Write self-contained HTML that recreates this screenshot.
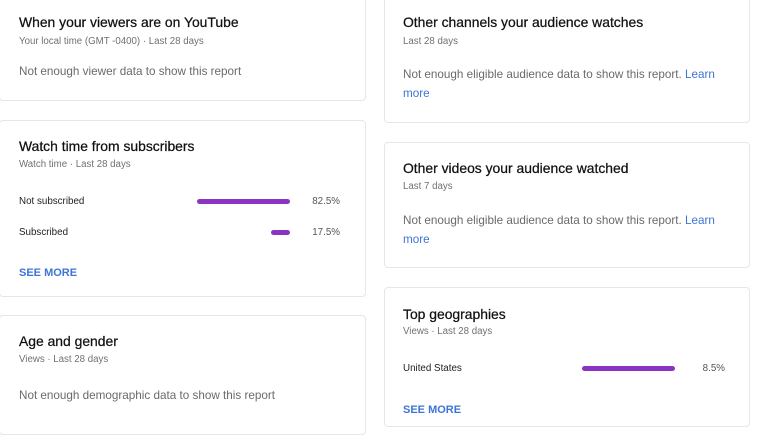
<!DOCTYPE html>
<html><head><meta charset="utf-8"><style>
body{margin:0;width:768px;height:415px;overflow:hidden;background:#fff;font-family:"Liberation Sans",Arial,sans-serif;position:relative}
.c{position:absolute;border:1px solid #e6e6e6;border-radius:4px;background:#fff;box-sizing:border-box}
.t{position:absolute;font-size:13.9px;font-weight:500;color:#111;white-space:nowrap;line-height:16px;-webkit-text-stroke:0.25px #111}
.s{position:absolute;font-size:9.7px;color:#717171;white-space:nowrap;line-height:12px}
.b{position:absolute;font-size:11.7px;color:#6a6a6a;white-space:nowrap;line-height:14px}
.r{position:absolute;font-size:9.8px;color:#222;white-space:nowrap;line-height:12px}
.p{position:absolute;font-size:9.8px;color:#555;white-space:nowrap;line-height:12px;text-align:right;width:40px}
.bar{position:absolute;height:5px;border-radius:3px;background:#8a35c2}
.m{position:absolute;font-size:11px;font-weight:bold;color:#3e74d4;line-height:12px}
a{color:#3e74d4;text-decoration:none}
</style></head><body>
<div class="c" style="left:-1px;top:-10px;width:367px;height:111px"></div>
<div class="c" style="left:-1px;top:120px;width:367px;height:177px"></div>
<div class="c" style="left:-1px;top:315px;width:367px;height:120px"></div>
<div class="c" style="left:384px;top:-10px;width:366px;height:133px"></div>
<div class="c" style="left:384px;top:142px;width:366px;height:126px"></div>
<div class="c" style="left:384px;top:287px;width:366px;height:140px"></div>

<div class="t" style="left:19px;top:14px">When your viewers are on YouTube</div>
<div class="s" style="left:19px;top:36px">Your local time (GMT -0400) · Last 28 days</div>
<div class="b" style="left:19px;top:65px">Not enough viewer data to show this report</div>

<div class="t" style="left:19px;top:138px">Watch time from subscribers</div>
<div class="s" style="left:19px;top:159px">Watch time · Last 28 days</div>
<div class="r" style="left:19px;top:196px">Not subscribed</div>
<div class="bar" style="left:197px;top:199px;width:93px"></div>
<div class="p" style="left:300px;top:196px">82.5%</div>
<div class="r" style="left:19px;top:227px">Subscribed</div>
<div class="bar" style="left:271px;top:230px;width:19px"></div>
<div class="p" style="left:300px;top:227px">17.5%</div>
<div class="m" style="left:19px;top:267px">SEE MORE</div>

<div class="t" style="left:19px;top:333px">Age and gender</div>
<div class="s" style="left:19px;top:354px">Views · Last 28 days</div>
<div class="b" style="left:19px;top:389px">Not enough demographic data to show this report</div>

<div class="t" style="left:403px;top:14px">Other channels your audience watches</div>
<div class="s" style="left:403px;top:36px">Last 28 days</div>
<div class="b" style="left:403px;top:68px">Not enough eligible audience data to show this report. <a>Learn</a></div>
<div class="b" style="left:403px;top:87px"><a>more</a></div>

<div class="t" style="left:403px;top:160px">Other videos your audience watched</div>
<div class="s" style="left:403px;top:181px">Last 7 days</div>
<div class="b" style="left:403px;top:214px">Not enough eligible audience data to show this report. <a>Learn</a></div>
<div class="b" style="left:403px;top:233px"><a>more</a></div>

<div class="t" style="left:403px;top:306px">Top geographies</div>
<div class="s" style="left:403px;top:326px">Views · Last 28 days</div>
<div class="r" style="left:403px;top:363px">United States</div>
<div class="bar" style="left:582px;top:366px;width:93px"></div>
<div class="p" style="left:685px;top:363px">8.5%</div>
<div class="m" style="left:403px;top:404px">SEE MORE</div>
</body></html>
